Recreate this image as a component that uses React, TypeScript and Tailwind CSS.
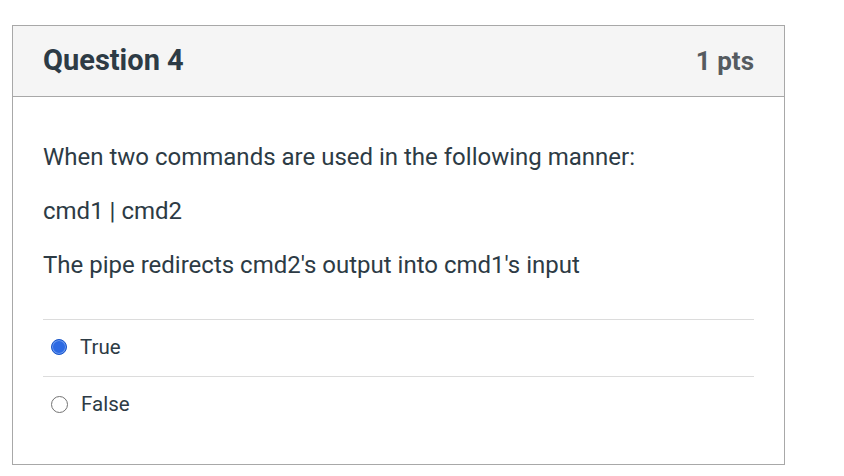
import React from "react";

export default function App() {
  return (
    <div className="w-[844px] h-[476px] bg-white pt-[25px] pl-[12px]" style={{ fontFamily: "Roboto, 'Noto Sans', sans-serif" }}>
      <div className="w-[773px] h-[440px] border border-[#a8a8a8] flex flex-col">
        <div className="h-[71px] bg-[#f5f5f5] border-b border-[#a8a8a8] flex items-center justify-between pl-[30px] pr-[30px]">
          <div className="text-[29px] font-bold text-[#2d3b45] tracking-[0px]">Question 4</div>
          <div className="text-[26px] font-bold text-[#555b60] tracking-[0px]">1 pts</div>
        </div>
        <div className="px-[30px] pt-[45px] text-[#2d3b45]">
          <p className="text-[24px] leading-[30px] mb-[24px]">When two commands are used in the following manner:</p>
          <p className="text-[24px] leading-[30px] mb-[24px]">cmd1 | cmd2</p>
          <p className="text-[24px] leading-[30px]">The pipe redirects cmd2's output into cmd1's input</p>
          <div className="mt-[39px] border-t border-[#dcdcdc]">
            <div className="h-[57px] flex items-center gap-[13px] pl-[8px] pb-[2px] border-b border-[#dcdcdc]">
              <span className="w-[16px] h-[16px] rounded-full bg-[#2d6ae3] border border-[#1b57c9] shadow-[inset_0_0_0_1px_#6c9aef]"></span>
              <span className="text-[20.5px]">True</span>
            </div>
            <div className="h-[56px] flex items-center gap-[13px] pl-[8px] pb-[2px]">
              <span className="w-[17px] h-[17px] rounded-full bg-white border-[1.5px] border-[#737373]"></span>
              <span className="text-[20.5px]">False</span>
            </div>
          </div>
        </div>
      </div>
    </div>
  );
}
